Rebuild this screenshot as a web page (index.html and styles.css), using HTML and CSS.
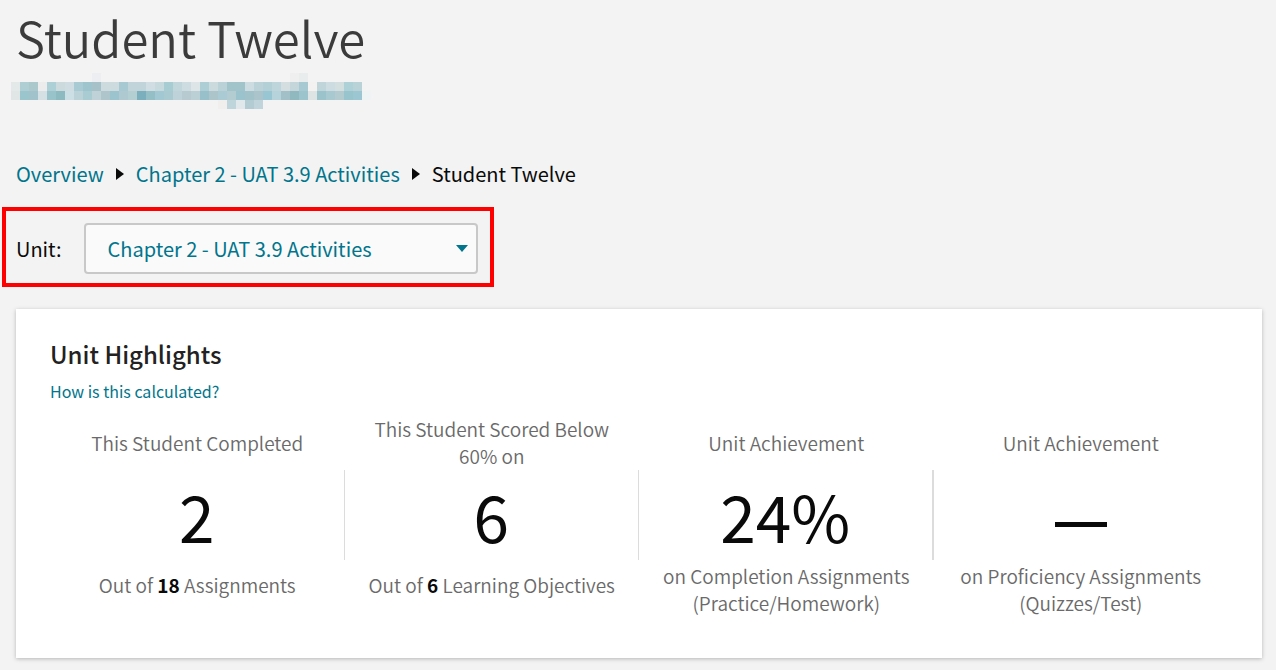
FILE: index.html
```html
<!DOCTYPE html>
<html lang="en">
<head>
<meta charset="utf-8">
<meta name="viewport" content="width=device-width, initial-scale=1">
<title>Student Twelve</title>
<link rel="stylesheet" href="styles.css">
</head>
<body>
<main class="page">
  <header class="student">
    <h1 class="student-name">Student Twelve</h1>
    <svg class="redacted" viewBox="0 0 40 4" width="360" height="36" shape-rendering="crispEdges" aria-hidden="true"></svg>
  </header>

  <nav class="breadcrumb" aria-label="Breadcrumb">
    <a href="#overview">Overview</a>
    <svg class="crumb-arrow" width="8" height="12" viewBox="0 0 8 12" aria-hidden="true"><path d="M0 0L8 6L0 12Z"/></svg>
    <a href="#chapter-2">Chapter 2 - UAT 3.9 Activities</a>
    <svg class="crumb-arrow" width="8" height="12" viewBox="0 0 8 12" aria-hidden="true"><path d="M0 0L8 6L0 12Z"/></svg>
    <span>Student Twelve</span>
  </nav>

  <div class="unit-picker">
    <label for="unit">Unit:</label>
    <div class="select-wrap">
      <select id="unit" class="select">
        <option>Chapter 2 - UAT 3.9 Activities</option>
      </select>
      <svg class="select-arrow" width="12" height="7" viewBox="0 0 12 7" aria-hidden="true"><path d="M0 0H12L6 7Z"/></svg>
    </div>
  </div>

  <section class="card">
    <h2 class="card-title">Unit Highlights</h2>
    <a class="card-link" href="#calculation">How is this calculated?</a>
    <div class="stats">
      <div class="stat">
        <div class="stat-label">This Student Completed</div>
        <div class="stat-value">2</div>
        <div class="stat-note"><p>Out of <strong>18</strong> Assignments</p></div>
      </div>
      <div class="stat">
        <div class="stat-label">This Student Scored Below 60% on</div>
        <div class="stat-value">6</div>
        <div class="stat-note"><p>Out of <strong>6</strong> Learning Objectives</p></div>
      </div>
      <div class="stat">
        <div class="stat-label">Unit Achievement</div>
        <div class="stat-value">24%</div>
        <div class="stat-note"><p>on Completion Assignments (Practice/Homework)</p></div>
      </div>
      <div class="stat">
        <div class="stat-label">Unit Achievement</div>
        <div class="stat-value"><span class="dash" role="img" aria-label="No score"></span></div>
        <div class="stat-note"><p>on Proficiency Assignments (Quizzes/Test)</p></div>
      </div>
    </div>
  </section>
</main>
<script src="redacted.js"></script>
</body>
</html>
```
FILE: redacted.js
```js
// Mosaic that hides the student's email: [row, first column, cell colours].
const rows = [
  [0, 9, "eceef1"],
  [0, 31, "efefef e8eced"],
  [1, 0, "e3e8e8 afced4 abc8cd ececec add0d7 cddadd cfdde2 a7cad3 9ec5ce a6c1c7 cddbdf cddbdf a7cad2 c1d4d9 c1d4d9 d0dde2 c6d9dd a7ccd2 c0d6db cddce1 dde5e7 aeced5 cadadd bad1d8 a1c3ca a1c3ca cddce1 bbd2d9 b3d0d6 bfd5dc d4dee0 c4d6d9 a7c9d1 f3f2f1 c0d5da cddce0 d3dedf aed0d7 b9d2d8"],
  [2, 0, "e0e5e5 9bc5cc a2c2cb d5e0e4 98c3cb 8dbac1 cbdfe5 bcd2d9 a9ccd3 bfd2d7 adc5cb 9cc4ce afc9d0 b3cfd1 7cafbd 95bfc7 a2c9d3 a8cad0 bed3d9 b6cacf bad0d5 97c0ca abc5cb aacbd4 b3ccd2 9bc3ce a1c2c8 abc4cb 98c6d3 b6d2da a1c0c7 90b8bf 9bc4cd dee3e3 9bc3cc a9c9d1 b3cacf 98c5cd 9cc7d2 eef3f3"],
  [3, 23, "f0efee bfd5dc e1e8eb b3ccd3 bfd5db"]
];
const svg = document.querySelector(".redacted");
for (const [y, x0, colors] of rows) {
  colors.split(" ").forEach((color, i) => {
    const cell = document.createElementNS("http://www.w3.org/2000/svg", "rect");
    cell.setAttribute("x", x0 + i);
    cell.setAttribute("y", y);
    cell.setAttribute("width", 1);
    cell.setAttribute("height", 1);
    cell.setAttribute("fill", "#" + color);
    svg.appendChild(cell);
  });
}
```
FILE: styles.css
```css
* {
  box-sizing: border-box;
}

body {
  margin: 0;
  background: #f3f3f3;
  color: #0a0a0a;
  font-family: "Noto Sans CJK SC", "Noto Sans", sans-serif;
  font-size: 20px;
  line-height: 27px;
}

h1,
h2,
p {
  margin: 0;
}

a {
  color: #00758c;
  text-decoration: none;
}

.page {
  padding: 9px 14px 11px 16px;
}

.student-name {
  padding-bottom: 8px;
  color: #3b3b3b;
  font-size: 49px;
  font-weight: 350;
  line-height: 56px;
}

.redacted {
  display: block;
  margin-left: -5px;
}

.breadcrumb {
  display: flex;
  align-items: center;
  gap: 12px;
  margin-top: 51px;
}

.crumb-arrow {
  fill: #0a0a0a;
}

.unit-picker {
  display: flex;
  align-items: center;
  gap: 22px;
  width: fit-content;
  margin: 20px 0 22px -14px;
  padding: 12px 12px 9px 10px;
  border: 4px solid #ff0000;
}

.select-wrap {
  position: relative;
}

.select {
  appearance: none;
  width: 394px;
  max-width: 100%;
  height: 51px;
  padding: 0 40px 0 22px;
  border: 2px solid #c8c8c8;
  border-radius: 4px;
  background: #fafafa;
  color: #00758c;
  font: inherit;
}

.select-arrow {
  position: absolute;
  top: 22px;
  right: 10px;
  fill: #00758c;
  pointer-events: none;
}

.card {
  padding: 29px 34px 42px;
  background: #ffffff;
  box-shadow: 0 1px 4px rgba(0, 0, 0, 0.25);
}

.card-title {
  color: #222222;
  font-size: 24px;
  font-weight: 500;
  line-height: 32px;
}

.card-link {
  display: block;
  width: fit-content;
  margin-top: 9px;
  font-size: 16px;
  line-height: 24px;
}

.stats {
  display: grid;
  grid-template-columns: repeat(4, 1fr);
  margin-top: 12px;
  color: #6a6a6a;
  font-size: 19px;
  font-weight: 350;
  text-align: center;
}

.stat-label {
  display: flex;
  align-items: center;
  justify-content: center;
  height: 54px;
  margin-bottom: 1px;
  padding: 0 24px;
}

.stat-value {
  display: flex;
  align-items: center;
  justify-content: center;
  height: 90px;
  border-right: 1px solid #dcdcdc;
  color: #0a0a0a;
  font-size: 64px;
  font-weight: 400;
}

.stat:nth-child(3) .stat-value {
  border-right-width: 2px;
}

.stat:last-child .stat-value {
  border-right: 0;
}

.stat-note {
  display: flex;
  align-items: center;
  justify-content: center;
  min-height: 44px;
  margin-top: 2px;
  padding: 0 20px;
}

.stat-note strong {
  color: #0a0a0a;
}

.dash {
  width: 52px;
  height: 5px;
  margin-top: 18px;
  background: #0a0a0a;
}
```
